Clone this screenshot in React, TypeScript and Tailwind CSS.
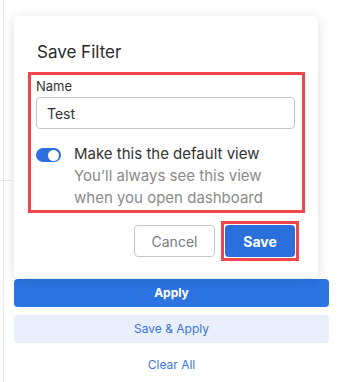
import React from "react";

export default function App() {
  return (
    <div
      className="relative w-[339px] h-[382px] bg-white overflow-hidden"
      style={{ fontFamily: "Inter, 'Noto Sans', sans-serif" }}
    >
      {/* faint background edges */}
      <div className="absolute left-[3px] top-0 h-full w-px bg-[#ececec]" />
      <div className="absolute left-0 top-[180px] h-px w-[12px] bg-[#e6e6e6]" />

      {/* panel content */}
      <div className="flex flex-col pl-[14px] pr-[10px]">
        <div className="h-[279px]" />
        <button className="h-[28px] w-full rounded-[4px] bg-[#2c74e2] text-[12px] font-bold text-white">
          Apply
        </button>
        <button className="mt-[8px] h-[28px] w-full rounded-[4px] bg-[#e9effb] text-[12px] text-[#3a74d6]">
          Save &amp; Apply
        </button>
        <div className="mt-[13px] text-center text-[12px] text-[#3a78dc]">Clear All</div>
      </div>

      {/* popover */}
      <div className="absolute left-[14px] top-[16px] w-[304px] h-[262px] rounded-[5px] bg-white shadow-[0_2px_12px_rgba(0,0,0,0.14)] flex flex-col">
        <div className="pl-[23px] pt-[24px] text-[17px] leading-[24px] text-[#2a2a2a]">Save Filter</div>
        <div className="mt-[8px] ml-[14px] w-[277px] border-[3px] border-[#f2464d] pl-[5px] pr-[7px] pt-[3px] pb-[1px] flex flex-col">
          <div className="text-[13px] leading-[16px] text-[#333]">Name</div>
          <div className="mt-[3px] h-[32px] rounded-[4px] border border-[#c4c4c4] flex items-center pl-[10px] text-[14px] text-[#333]">
            Test
          </div>
          <div className="mt-[14px] flex items-start">
            <div className="mt-[5px] h-[14px] w-[25px] rounded-full bg-[#2d6fe0] flex items-center justify-end pr-[2px] shrink-0">
              <div className="h-[11px] w-[11px] rounded-full bg-white" />
            </div>
            <div className="ml-[13px] flex flex-col text-[15px] leading-[22px]">
              <span className="text-[#333]">Make this the default view</span>
              <span className="text-[#8a8a8a]">You’ll always see this view</span>
              <span className="text-[#8a8a8a]">when you open dashboard</span>
            </div>
          </div>
        </div>
        <div className="mt-[8px] flex items-center justify-end pr-[19px] gap-[6px]">
          <button className="h-[32px] w-[81px] rounded-[4px] border border-[#c8c8c8] bg-white text-[14px] text-[#7a7a7a]">
            Cancel
          </button>
          <div className="border-[3px] border-[#f2464d] p-px">
            <button className="h-[32px] w-[70px] rounded-[4px] bg-[#2b6fdd] text-[14px] font-bold text-white">
              Save
            </button>
          </div>
        </div>
      </div>
    </div>
  );
}
